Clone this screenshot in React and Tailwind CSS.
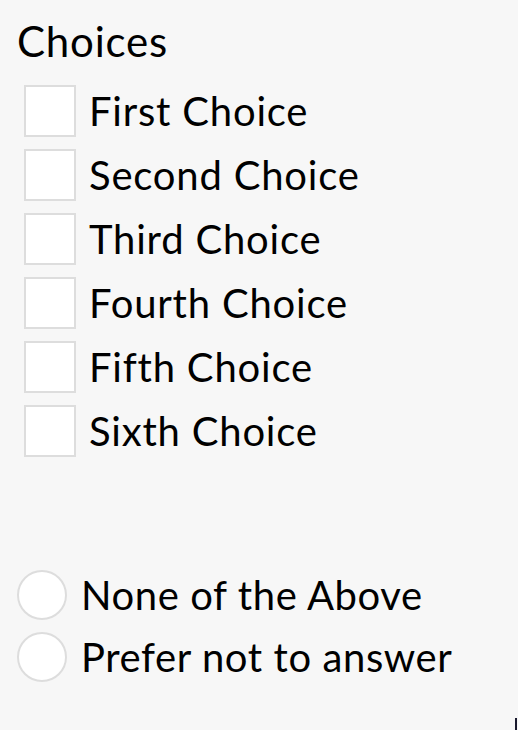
import { useState } from "react";

const choices = ["First Choice", "Second Choice", "Third Choice", "Fourth Choice", "Fifth Choice", "Sixth Choice"];
const extras = ["None of the Above", "Prefer not to answer"];

export default function App() {
  const [checked, setChecked] = useState({});
  const [picked, setPicked] = useState(null);

  return (
    <div className="relative min-h-[730px] w-full bg-[#f7f7f7] text-black" style={{ fontFamily: "Lato, 'Noto Sans', sans-serif" }}>
      <div className="pl-[17px] pt-[18px]">
        <h2 className="text-[42px] leading-[46px] font-normal tracking-[0.8px]">Choices</h2>
        <div className="mt-[21px] flex flex-col gap-[12px] pl-[7px]">
          {choices.map((c) => (
            <label key={c} className="flex items-center gap-[13px] cursor-pointer">
              <span
                onClick={() => setChecked({ ...checked, [c]: !checked[c] })}
                className="w-[52px] h-[52px] bg-white border-2 border-[#dddddd] flex items-center justify-center"
              >
                {checked[c] ? "✓" : null}
              </span>
              <span className="text-[40px] leading-none tracking-[0.8px]">{c}</span>
            </label>
          ))}
        </div>
        <div className="mt-[113px] flex flex-col gap-[12px]">
          {extras.map((c) => (
            <label key={c} className="flex items-center gap-[14px] cursor-pointer" onClick={() => setPicked(c)}>
              <span className="w-[50px] h-[50px] rounded-full bg-white border-2 border-[#dddddd] flex items-center justify-center">
                {picked === c ? <span className="w-5 h-5 rounded-full bg-black" /> : null}
              </span>
              <span className="text-[40px] leading-none tracking-[0.6px]">{c}</span>
            </label>
          ))}
        </div>
      </div>
      <div className="absolute right-[1px] bottom-0 w-[2px] h-[12px] bg-[#1a1a2e]" />
    </div>
  );
}
